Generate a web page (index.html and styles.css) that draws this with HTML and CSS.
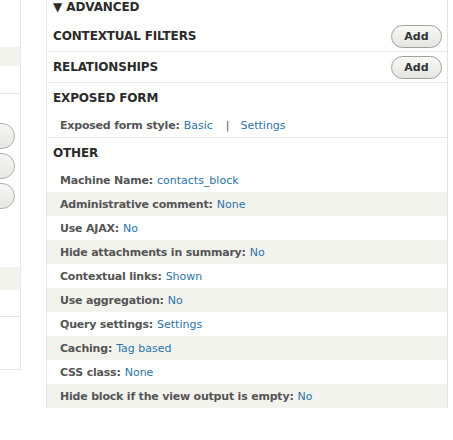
FILE: index.html
```html
<!DOCTYPE html>
<html>
<head>
<meta charset="utf-8">
<link rel="stylesheet" href="styles.css">
</head>
<body>
<div class="page">
  <div class="side">
    <div class="side-gap s1"></div>
    <div class="side-band b1"></div>
    <div class="side-gap s2"></div>
    <div class="side-btns">
      <div class="side-btn"></div>
      <div class="side-btn"></div>
      <div class="side-btn"></div>
    </div>
    <div class="side-band b2"></div>
    <div class="side-gap s4"></div>
    <div class="side-gap s5"></div>
  </div>
  <div class="main">
    <div class="adv">▼ ADVANCED</div>
    <div class="sec-row">
      <span class="hd">CONTEXTUAL FILTERS</span>
      <button class="add">Add</button>
    </div>
    <div class="sec-row">
      <span class="hd">RELATIONSHIPS</span>
      <button class="add">Add</button>
    </div>
    <div class="sec">
      <div class="sec-hd"><span class="hd">EXPOSED FORM</span></div>
      <div class="item"><span class="lbl">Exposed form style:</span><a class="lnk">Basic</a><span class="pipe">|</span><a class="lnk">Settings</a></div>
    </div>
    <div class="sec-hd"><span class="hd">OTHER</span></div>
    <div class="item"><span class="lbl">Machine Name:</span><a class="lnk">contacts_block</a></div>
    <div class="item odd"><span class="lbl">Administrative comment:</span><a class="lnk">None</a></div>
    <div class="item"><span class="lbl">Use AJAX:</span><a class="lnk">No</a></div>
    <div class="item odd"><span class="lbl">Hide attachments in summary:</span><a class="lnk">No</a></div>
    <div class="item"><span class="lbl">Contextual links:</span><a class="lnk">Shown</a></div>
    <div class="item odd"><span class="lbl">Use aggregation:</span><a class="lnk">No</a></div>
    <div class="item"><span class="lbl">Query settings:</span><a class="lnk">Settings</a></div>
    <div class="item odd"><span class="lbl">Caching:</span><a class="lnk">Tag based</a></div>
    <div class="item"><span class="lbl">CSS class:</span><a class="lnk">None</a></div>
    <div class="item odd"><span class="lbl">Hide block if the view output is empty:</span><a class="lnk">No</a></div>
  </div>
</div>
</body>
</html>
```
FILE: styles.css
```css
* { box-sizing: border-box; }
html, body { margin: 0; padding: 0; background: #fff; }
body {
  font-family: "DejaVu Sans", "Liberation Sans", sans-serif;
  font-size: 11px;
  color: #333;
  width: 453px;
  height: 440px;
  overflow: hidden;
}
.page {
  display: flex;
  align-items: flex-start;
}
.side {
  width: 21px;
  height: 370px;
  border-right: 1px solid #e8e8e8;
  display: flex;
  flex-direction: column;
  overflow: hidden;
}
.side-gap.s1 { height: 47px; }
.side-band { background: #f3f3ee; }
.side-band.b1 { height: 19px; }
.side-band.b2 { height: 23px; }
.side-gap.s2 { height: 28px; border-bottom: 1px solid #e6e6e6; }
.side-btns {
  display: flex;
  flex-direction: column;
  gap: 4px;
  padding-top: 29px;
  padding-bottom: 58px;
}
.side-btn {
  width: 42px;
  height: 26px;
  margin-left: -27px;
  border: 1px solid #b0b0b0;
  border-radius: 13px;
  background: linear-gradient(#f6f6f4, #e6e6e2);
}
.side-gap.s4 { height: 27px; border-bottom: 1px solid #e6e6e6; }
.side-gap.s5 { height: 53px; border-bottom: 1px solid #e6e6e6; }

.main {
  margin-left: 25px;
  width: 402px;
  border-left: 1px solid #e8e8e8;
  border-right: 1px solid #e2e2e2;
  display: flex;
  flex-direction: column;
}
.adv {
  height: 21px;
  line-height: 14px;
  padding-left: 6px;
  font-weight: bold;
  color: #2b2b2b;
  font-size: 12px;
  letter-spacing: -0.1px;
}
.hd {
  font-weight: bold;
  color: #2b2b2b;
  text-transform: uppercase;
  font-size: 12px;
  letter-spacing: -0.15px;
}
.sec-row {
  height: 31px;
  border-bottom: 1px solid #e8e8e8;
  display: flex;
  align-items: center;
  justify-content: space-between;
  padding: 0 5px 0 6px;
}
.add {
  width: 51px;
  height: 23px;
  border: 1px solid #a0a0a0;
  border-radius: 12px;
  background: linear-gradient(#f8f8f6, #e5e5e1);
  font-family: "DejaVu Sans", "Liberation Sans", sans-serif;
  font-size: 11px;
  font-weight: bold;
  color: #333;
  padding: 0;
  margin-top: 1px;
}
.sec {
  border-bottom: 1px solid #e8e8e8;
  display: flex;
  flex-direction: column;
}
.sec-hd {
  height: 30px;
  display: flex;
  align-items: center;
  padding-left: 6px;
}
.item {
  height: 24px;
  display: flex;
  align-items: center;
  padding-left: 13px;
  white-space: nowrap;
}
.item.odd { background: #f3f3ee; }
.lbl { font-weight: bold; color: #555; letter-spacing: -0.2px; margin-right: 4px; }
.lnk { color: #2b73a8; text-decoration: none; }
.pipe { color: #555; margin: 0 11px 0 13px; }
```
